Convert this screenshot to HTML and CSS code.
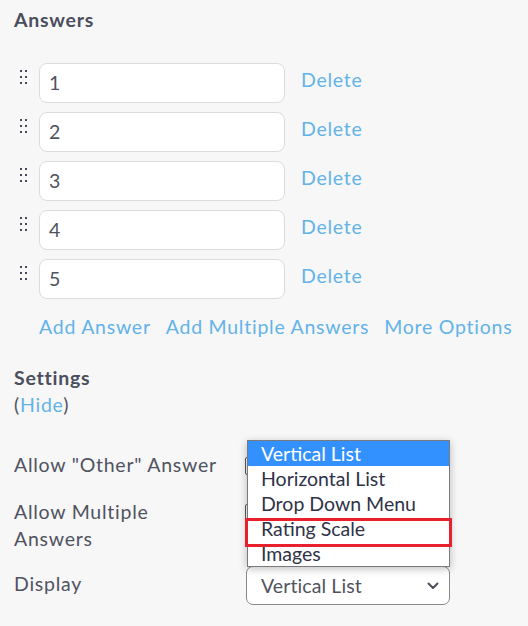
FILE: index.html
```html
<!DOCTYPE html>
<html>
<head>
<meta charset="utf-8">
<link rel="stylesheet" href="styles.css">
</head>
<body>
<div class="page">
  <h2 class="heading">Answers</h2>
  <div class="answers">
    <div class="answer-row">
      <svg class="handle" width="7" height="14" viewBox="0 0 7 14"><rect x="0" y="0" width="2" height="2"/><rect x="5" y="0" width="2" height="2"/><rect x="0" y="6" width="2" height="2"/><rect x="5" y="6" width="2" height="2"/><rect x="0" y="12" width="2" height="2"/><rect x="5" y="12" width="2" height="2"/></svg>
      <div class="answer-input">1</div>
      <a class="link delete">Delete</a>
    </div>
    <div class="answer-row">
      <svg class="handle" width="7" height="14" viewBox="0 0 7 14"><rect x="0" y="0" width="2" height="2"/><rect x="5" y="0" width="2" height="2"/><rect x="0" y="6" width="2" height="2"/><rect x="5" y="6" width="2" height="2"/><rect x="0" y="12" width="2" height="2"/><rect x="5" y="12" width="2" height="2"/></svg>
      <div class="answer-input">2</div>
      <a class="link delete">Delete</a>
    </div>
    <div class="answer-row">
      <svg class="handle" width="7" height="14" viewBox="0 0 7 14"><rect x="0" y="0" width="2" height="2"/><rect x="5" y="0" width="2" height="2"/><rect x="0" y="6" width="2" height="2"/><rect x="5" y="6" width="2" height="2"/><rect x="0" y="12" width="2" height="2"/><rect x="5" y="12" width="2" height="2"/></svg>
      <div class="answer-input">3</div>
      <a class="link delete">Delete</a>
    </div>
    <div class="answer-row">
      <svg class="handle" width="7" height="14" viewBox="0 0 7 14"><rect x="0" y="0" width="2" height="2"/><rect x="5" y="0" width="2" height="2"/><rect x="0" y="6" width="2" height="2"/><rect x="5" y="6" width="2" height="2"/><rect x="0" y="12" width="2" height="2"/><rect x="5" y="12" width="2" height="2"/></svg>
      <div class="answer-input">4</div>
      <a class="link delete">Delete</a>
    </div>
    <div class="answer-row">
      <svg class="handle" width="7" height="14" viewBox="0 0 7 14"><rect x="0" y="0" width="2" height="2"/><rect x="5" y="0" width="2" height="2"/><rect x="0" y="6" width="2" height="2"/><rect x="5" y="6" width="2" height="2"/><rect x="0" y="12" width="2" height="2"/><rect x="5" y="12" width="2" height="2"/></svg>
      <div class="answer-input">5</div>
      <a class="link delete">Delete</a>
    </div>
  </div>
  <div class="add-links">
    <a class="link">Add Answer</a>
    <a class="link">Add Multiple Answers</a>
    <a class="link">More Options</a>
  </div>
  <h3 class="subheading">Settings</h3>
  <div class="hide-line">(<a class="link">Hide</a>)</div>

  <div class="settings">
    <div class="setting-row row-other">
      <div class="setting-label">Allow "Other" Answer</div>
      <div class="setting-control"><span class="hidden-box"></span></div>
    </div>
    <div class="setting-row row-multi">
      <div class="setting-label">Allow Multiple<br>Answers</div>
      <div class="setting-control"><span class="hidden-box"></span></div>
    </div>
    <div class="setting-row row-display">
      <div class="setting-label display-label">Display</div>
      <div class="select">
        <span>Vertical List</span>
        <svg class="chevron" width="12" height="8" viewBox="0 0 12 8"><polyline points="1.5,1.5 6,6 10.5,1.5"/></svg>
      </div>
    </div>
    <div class="dropdown">
      <div class="option selected">Vertical List</div>
      <div class="option">Horizontal List</div>
      <div class="option">Drop Down Menu</div>
      <div class="option">Rating Scale</div>
      <div class="option">Images</div>
    </div>
    <div class="highlight-box"></div>
  </div>
</div>
</body>
</html>
```

FILE: styles.css
```css
html, body {
  margin: 0;
  padding: 0;
  background: #f7f7f7;
}
body {
  font-family: Lato, "Open Sans", sans-serif;
  font-size: 19.5px;
  letter-spacing: 0.75px;
  color: #50535f;
  width: 528px;
  height: 626px;
  overflow: hidden;
}
.page {
  padding: 0 0 0 14px;
}
.heading {
  margin: 0;
  padding-top: 6px;
  font-size: 19.5px;
  line-height: 27px;
  font-weight: 700;
  color: #4b4e5c;
}
.answers {
  margin-top: 30px;
  display: flex;
  flex-direction: column;
  gap: 9px;
}
.answer-row {
  display: flex;
  align-items: flex-start;
}
.handle {
  fill: #474a56;
  margin: 7px 0 0 6px;
  width: 7px;
  height: 14px;
  overflow: visible;
  shape-rendering: crispEdges;
}
.answer-input {
  margin-left: 12px;
  width: 246px;
  height: 40px;
  box-sizing: border-box;
  background: #fff;
  border: 1px solid #dcdcdc;
  border-radius: 8px;
  padding: 0 9px;
  line-height: 38px;
  color: #50535f;
}
.link {
  color: #63b3e8;
  text-decoration: none;
}
.delete {
  margin-left: 16px;
  line-height: 34px;
}
.add-links {
  margin-top: 14px;
  margin-left: 25px;
  display: flex;
  gap: 15px;
  line-height: 27px;
}
.subheading {
  margin: 24px 0 0 0;
  font-size: 19.5px;
  line-height: 27px;
  font-weight: 700;
  color: #4b4e5c;
}
.hide-line {
  line-height: 27px;
}
.settings {
  position: relative;
  margin-top: 33px;
}
.setting-row {
  display: flex;
  align-items: flex-start;
}
.setting-label {
  width: 232px;
  line-height: 27px;
}
.row-multi {
  margin-top: 20px;
}
.row-display {
  margin-top: 14px;
}
.display-label {
  padding-top: 4px;
}
.setting-control {
  padding-top: 6px;
}
.hidden-box {
  display: block;
  width: 30px;
  height: 16px;
  border: 1px solid #5a5a5a;
  border-radius: 2px;
  margin-left: -1px;
}
.select {
  width: 204px;
  height: 39px;
  box-sizing: border-box;
  border: 1px solid #8a8a8a;
  border-radius: 7px;
  background: #fff;
  display: flex;
  align-items: center;
  justify-content: space-between;
  padding: 0 10px 0 14px;
  color: #50535f;
  letter-spacing: 0.1px;
}
.chevron {
  fill: none;
  stroke: #4c4f5a;
  stroke-width: 2;
  stroke-linecap: round;
  stroke-linejoin: round;
}
.dropdown {
  position: absolute;
  left: 233px;
  top: -11px;
  width: 203px;
  box-sizing: border-box;
  border: 1px solid #7a7a7a;
  background: #fff;
  box-shadow: 0 2px 8px rgba(0,0,0,0.25);
  letter-spacing: 0;
}
.option {
  height: 25px;
  line-height: 25px;
  padding-left: 13px;
  color: #2f3347;
}
.option.selected {
  background: #3391ff;
  color: #fff;
}
.highlight-box {
  position: absolute;
  left: 231px;
  top: 67px;
  width: 207px;
  height: 29px;
  box-sizing: border-box;
  border: 3px solid #e8202e;
}
```
